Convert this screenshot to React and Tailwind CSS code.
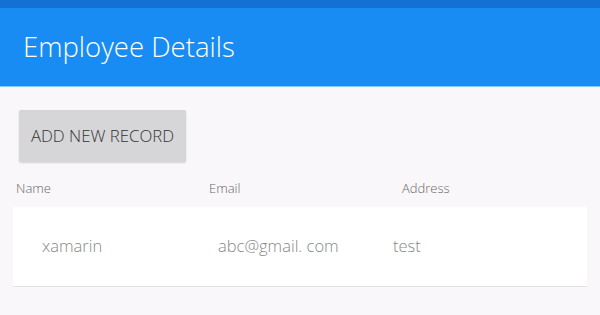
export default function App() {
  return (
    <div className="w-[600px] h-[315px] overflow-hidden bg-[#faf7fa] flex flex-col" style={{ fontFamily: '"Open Sans", "Noto Sans", sans-serif' }}>
      <div className="h-[8px] bg-[#1470d4]" />
      <div className="h-[79px] bg-[#198cf3] flex items-center pl-[23px] border-b border-[#7fd0ff]">
        <span className="text-[27.5px] text-white font-light">Employee Details</span>
      </div>
      <div className="pl-[19px] pt-[23px]">
        <button className="w-[167px] h-[52px] bg-[#d6d5d7] rounded-[2px] shadow-[0_1px_2px_rgba(0,0,0,0.15)] text-[16.8px] text-[#333] font-light flex items-center justify-center">
          ADD NEW RECORD
        </button>
      </div>
      <div className="flex pl-[16px] mt-[17px] text-[13px] text-[#666] font-light">
        <span className="w-[193px]">Name</span>
        <span className="w-[193px]">Email</span>
        <span>Address</span>
      </div>
      <div className="mx-[13px] mt-[8px] h-[80px] bg-white border-b border-[#e4e0e4] flex items-center pl-[29px] text-[16.5px] text-[#888] font-light">
        <span className="w-[176px]">xamarin</span>
        <span className="w-[175px]">abc@gmail. com</span>
        <span>test</span>
      </div>
    </div>
  );
}
